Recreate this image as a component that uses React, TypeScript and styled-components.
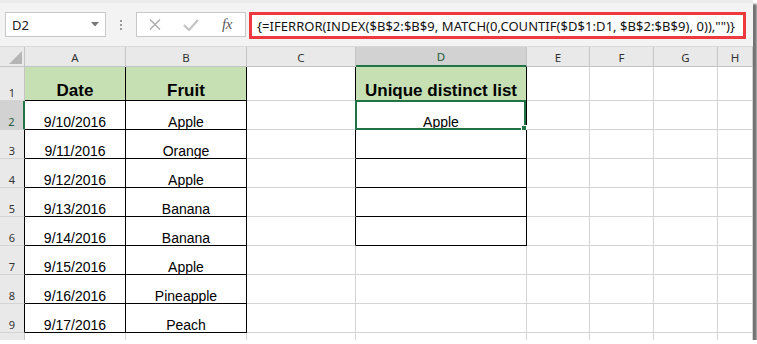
import React from "react";
import styled, { createGlobalStyle, css } from "styled-components";

const GlobalStyle = createGlobalStyle`
  html, body { margin: 0; padding: 0; background: #ffffff; }
  * { box-sizing: border-box; }
`;

const GREEN = "#217346";
const GRID = "#d4d4d4";
const HEAD_LINE = "#c4c4c4";

const Frame = styled.div`
  width: 753px;
  height: 340px;
  overflow: hidden;
  background: #ffffff;
  box-shadow: 4px 4px 2px rgba(0, 0, 0, 0.55);
`;

const Toolbar = styled.div`
  height: 47px;
  display: flex;
  align-items: flex-start;
  padding: 12px 0 0 5px;
  background: #f3f3f3;
  border-top: 3px solid #ebebeb;
  border-bottom: 1px solid #d8d8d8;
`;

const NameBox = styled.div`
  width: 101px;
  height: 25px;
  margin-top: -3px;
  background: #ffffff;
  border: 1px solid #c8c8c8;
  display: flex;
  align-items: center;
  justify-content: space-between;
  padding: 0 6px 0 6px;
  font-family: "Noto Sans", "Open Sans", sans-serif;
  font-size: 13px;
  color: #222;
`;

const Grip = styled.div`
  margin-left: 14px;
  margin-top: 5px;
  display: flex;
  flex-direction: column;
  gap: 2px;
`;

const GripDot = styled.span`
  display: block;
  width: 2px;
  height: 2px;
  background: #9a9a9a;
`;

const FxBox = styled.div`
  margin-left: 14px;
  margin-top: -3px;
  width: 110px;
  height: 25px;
  background: #ffffff;
  border: 1px solid #c8c8c8;
  display: flex;
  align-items: center;
  padding-left: 12px;
`;

const ToolIcon = styled.span<{ $gap: number }>`
  display: flex;
  align-items: center;
  margin-left: ${(p) => p.$gap}px;
`;

const FxLabel = styled.span`
  margin-left: 23px;
  font-family: "Liberation Serif", "DejaVu Serif", serif;
  font-style: italic;
  font-size: 15px;
  color: #5a5a5a;
  letter-spacing: -0.5px;
`;

const FormulaBox = styled.div`
  margin-left: 3px;
  margin-top: -3px;
  width: 497px;
  height: 27px;
  border: 3px solid #ee3a3f;
  background: #ffffff;
  display: flex;
  align-items: center;
  padding-left: 5px;
  font-family: "Noto Sans", "Open Sans", sans-serif;
  font-size: 13px;
  letter-spacing: 0.05px;
  color: #111;
  white-space: nowrap;
  overflow: hidden;
`;

const Sheet = styled.div`
  display: grid;
  grid-template-columns: 25px 101px 121px 109px 171px 63px 64px 64px 35px;
  grid-template-rows: 20px 34px repeat(9, 29px);
`;

const Corner = styled.div`
  background: #e9e9e9;
  border-right: 1px solid ${HEAD_LINE};
  border-bottom: 1px solid ${HEAD_LINE};
  display: flex;
  align-items: flex-end;
  justify-content: flex-end;
  padding: 0 2px 2px 0;
`;

const ColHeader = styled.div<{ $selected?: boolean }>`
  background: ${(p) => (p.$selected ? "#d2d2d2" : "#e9e9e9")};
  border-right: 1px solid ${HEAD_LINE};
  border-bottom: ${(p) => (p.$selected ? `2px solid ${GREEN}` : `1px solid ${HEAD_LINE}`)};
  display: flex;
  align-items: center;
  justify-content: center;
  font-family: "Noto Sans", "Open Sans", sans-serif;
  font-size: 11.5px;
  color: ${(p) => (p.$selected ? "#1e5a38" : "#333")};
  padding-top: 1px;
`;

const RowHeader = styled.div<{ $selected?: boolean; $dark?: boolean }>`
  background: ${(p) => (p.$selected ? "#d2d2d2" : "#e9e9e9")};
  border-right: ${(p) =>
    p.$selected ? `2px solid ${GREEN}` : `1px solid ${p.$dark ? "#000" : HEAD_LINE}`};
  border-bottom: 1px solid ${GRID};
  display: flex;
  align-items: flex-end;
  justify-content: center;
  padding-bottom: 1.5px;
  font-family: "Noto Sans", "Open Sans", sans-serif;
  font-size: 11px;
  line-height: 13px;
  color: ${(p) => (p.$selected ? "#1e5a38" : "#333")};
`;

const Cell = styled.div<{ $fill?: boolean; $rDark?: boolean; $bDark?: boolean; $head?: boolean }>`
  position: relative;
  background: ${(p) => (p.$fill ? "#c6e0b4" : "#ffffff")};
  border-right: 1px solid ${(p) => (p.$rDark ? "#000" : GRID)};
  border-bottom: 1px solid ${(p) => (p.$bDark ? "#000" : GRID)};
  display: flex;
  align-items: flex-end;
  justify-content: center;
  font-family: "Liberation Sans", Arial, sans-serif;
  color: #000;
  white-space: nowrap;
  ${(p) =>
    p.$head
      ? css`
          font-size: 17px;
          font-weight: bold;
          line-height: 18px;
        `
      : css`
          font-size: 14px;
          line-height: 14px;
        `}
`;

const Selection = styled.div`
  position: absolute;
  left: -1px;
  top: -1px;
  right: 0;
  bottom: -1px;
  border: 2px solid ${GREEN};
  pointer-events: none;
`;

const FillHandle = styled.div`
  position: absolute;
  right: -3px;
  bottom: -3px;
  width: 6px;
  height: 6px;
  background: ${GREEN};
  border: 1px solid #ffffff;
`;

const COLS = ["A", "B", "C", "D", "E", "F", "G", "H"];

const DATA: string[][] = [
  ["Date", "Fruit", "", "Unique distinct list"],
  ["9/10/2016", "Apple", "", "Apple"],
  ["9/11/2016", "Orange"],
  ["9/12/2016", "Apple"],
  ["9/13/2016", "Banana"],
  ["9/14/2016", "Banana"],
  ["9/15/2016", "Apple"],
  ["9/16/2016", "Pineapple"],
  ["9/17/2016", "Peach"],
  [],
];

const inBox = (r: number, c: number) =>
  (r >= 1 && r <= 9 && c >= 0 && c <= 1) || (r >= 1 && r <= 6 && c === 3);

const FORMULA = '{=IFERROR(INDEX($B$2:$B$9, MATCH(0,COUNTIF($D$1:D1, $B$2:$B$9), 0)),"")}';

export default function App() {
  return (
    <>
      <GlobalStyle />
      <Frame>
        <Toolbar>
          <NameBox>
            <span>D2</span>
            <svg width="8" height="5" viewBox="0 0 8 5">
              <polygon points="0,0 8,0 4,4.5" fill="#777" />
            </svg>
          </NameBox>
          <Grip>
            <GripDot />
            <GripDot />
            <GripDot />
          </Grip>
          <FxBox>
            <ToolIcon $gap={0}>
              <svg width="12" height="11" viewBox="0 0 12 11">
                <path d="M1 0.5 L11 10.5 M11 0.5 L1 10.5" stroke="#a9a9a9" strokeWidth="1.3" fill="none" />
              </svg>
            </ToolIcon>
            <ToolIcon $gap={22}>
              <svg width="16" height="12" viewBox="0 0 16 12">
                <path d="M1 6 L6 11 L15 1" stroke="#c4c4c4" strokeWidth="2.2" fill="none" />
              </svg>
            </ToolIcon>
            <FxLabel>fx</FxLabel>
          </FxBox>
          <FormulaBox>{FORMULA}</FormulaBox>
        </Toolbar>
        <Sheet>
          <Corner>
            <svg width="13" height="13" viewBox="0 0 13 13">
              <polygon points="13,0 13,13 0,13" fill="#b5b5b5" />
            </svg>
          </Corner>
          {COLS.map((c) => (
            <ColHeader key={c} $selected={c === "D"}>
              {c}
            </ColHeader>
          ))}
          {DATA.map((row, ri) => {
            const r = ri + 1;
            return (
              <React.Fragment key={r}>
                <RowHeader $selected={r === 2} $dark={r >= 3 && r <= 9}>
                  {r}
                </RowHeader>
                {COLS.map((_, c) => (
                  <Cell
                    key={c}
                    $fill={r === 1 && inBox(r, c)}
                    $head={r === 1}
                    $rDark={inBox(r, c) || inBox(r, c + 1)}
                    $bDark={inBox(r, c) || inBox(r + 1, c)}
                  >
                    {row[c] || ""}
                    {r === 2 && c === 3 && (
                      <Selection>
                        <FillHandle />
                      </Selection>
                    )}
                  </Cell>
                ))}
              </React.Fragment>
            );
          })}
        </Sheet>
      </Frame>
    </>
  );
}
